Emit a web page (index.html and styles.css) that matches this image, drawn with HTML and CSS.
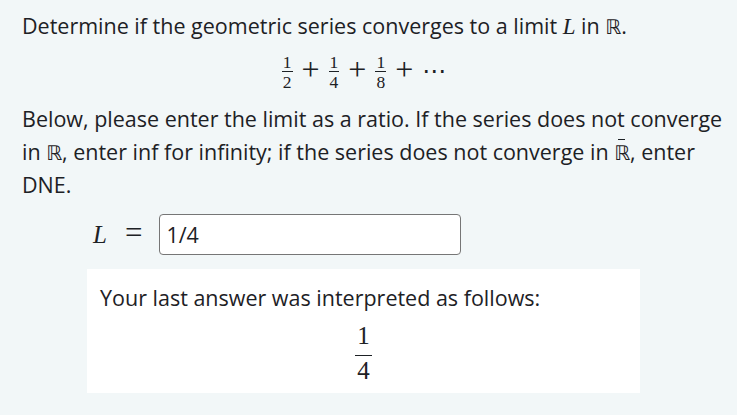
FILE: index.html
```html
<!DOCTYPE html>
<html lang="en">
<head>
<meta charset="utf-8">
<title>Geometric series</title>
<link rel="stylesheet" href="styles.css">
</head>
<body>
<div class="que">
  <p>Determine if the geometric series converges to a limit <span class="mi mi-inline">L</span> in <span class="bb">ℝ</span>.</p>
  <div class="series">
    <span class="frac frac-s"><span class="num">1</span><span class="den">2</span></span>
    <span class="mo">+</span>
    <span class="frac frac-s"><span class="num">1</span><span class="den">4</span></span>
    <span class="mo">+</span>
    <span class="frac frac-s"><span class="num">1</span><span class="den">8</span></span>
    <span class="mo">+</span>
    <span class="dots">⋯</span>
  </div>
  <p>Below, please enter the limit as a ratio. If the series does not converge in <span class="bb">ℝ</span>, enter inf for infinity; if the series does not converge in <span class="bb rbar">ℝ</span>, enter DNE.</p>
  <div class="answer">
    <span class="mi mi-big">L</span>
    <span class="eq">=</span>
    <input class="ans" type="text" value="1/4">
  </div>
  <div class="validation">
    <p>Your last answer was interpreted as follows:</p>
    <div class="vdisplay">
      <span class="frac frac-l"><span class="num">1</span><span class="den">4</span></span>
    </div>
  </div>
</div>
</body>
</html>
```
FILE: styles.css
```css
* { box-sizing: border-box; }
body {
  margin: 0;
  background: #ffffff;
  font-family: "Open Sans", "Noto Sans", sans-serif;
  color: #1d2125;
}
.que {
  width: 737px;
  background: #f2f7f8;
  padding: 8.5px 14px 30px 22px;
  font-size: 21.5px;
  line-height: 33px;
  border-radius: 0 0 4px 0;
}
.que p { margin: 0; }
.bb {
  font-family: "DejaVu Sans", sans-serif;
  font-size: 20px;
  line-height: 20px;
}
.rbar { position: relative; }
.rbar::before {
  content: "";
  position: absolute;
  left: 4px;
  width: 7px;
  top: -2px;
  height: 1.3px;
  background: currentColor;
}
.mi {
  font-family: "Liberation Serif", serif;
  font-style: italic;
}
.mi-inline { font-size: 23px; line-height: 20px; }
.series {
  display: flex;
  justify-content: center;
  align-items: center;
  padding: 11px 17px 12px 0;
}
.frac {
  display: inline-flex;
  flex-direction: column;
  font-family: "Liberation Serif", serif;
  text-align: center;
}
.frac-s { font-size: 17.5px; line-height: 15px; }
.frac-s .num { padding: 2px 1px 1px; border-bottom: 1px solid currentColor; }
.frac-s .den { padding: 3px 1px 0; }
.mo {
  font-family: "Liberation Serif", serif;
  font-size: 32px;
  line-height: 30px;
  padding-bottom: 5px;
  margin: 0 9px;
}
.dots {
  font-family: "DejaVu Sans", sans-serif;
  font-size: 24px;
  line-height: 30px;
}
.answer {
  display: flex;
  align-items: baseline;
  margin: 13px 0 0 71px;
}
.mi-big { font-size: 25px; }
.eq {
  font-family: "Liberation Serif", serif;
  font-size: 31px;
  margin: 0 17px 0 18px;
}
.ans {
  width: 302px;
  height: 41px;
  border: 1px solid #767676;
  border-radius: 4px;
  padding: 0 6px;
  font-family: "Open Sans", "Noto Sans", sans-serif;
  font-size: 21.5px;
  color: #1d2125;
  background: #ffffff;
}
.validation {
  margin: 14px 83px 0 65px;
  background: #ffffff;
  padding: 12px 13px 11.5px;
}
.vdisplay {
  display: flex;
  justify-content: center;
  padding-top: 12.5px;
}
.frac-l { font-size: 25px; line-height: 20px; }
.frac-l .num { padding: 0 2px 8.5px; border-bottom: 1px solid currentColor; }
.frac-l .den { padding: 5.5px 2px 0; }
```
